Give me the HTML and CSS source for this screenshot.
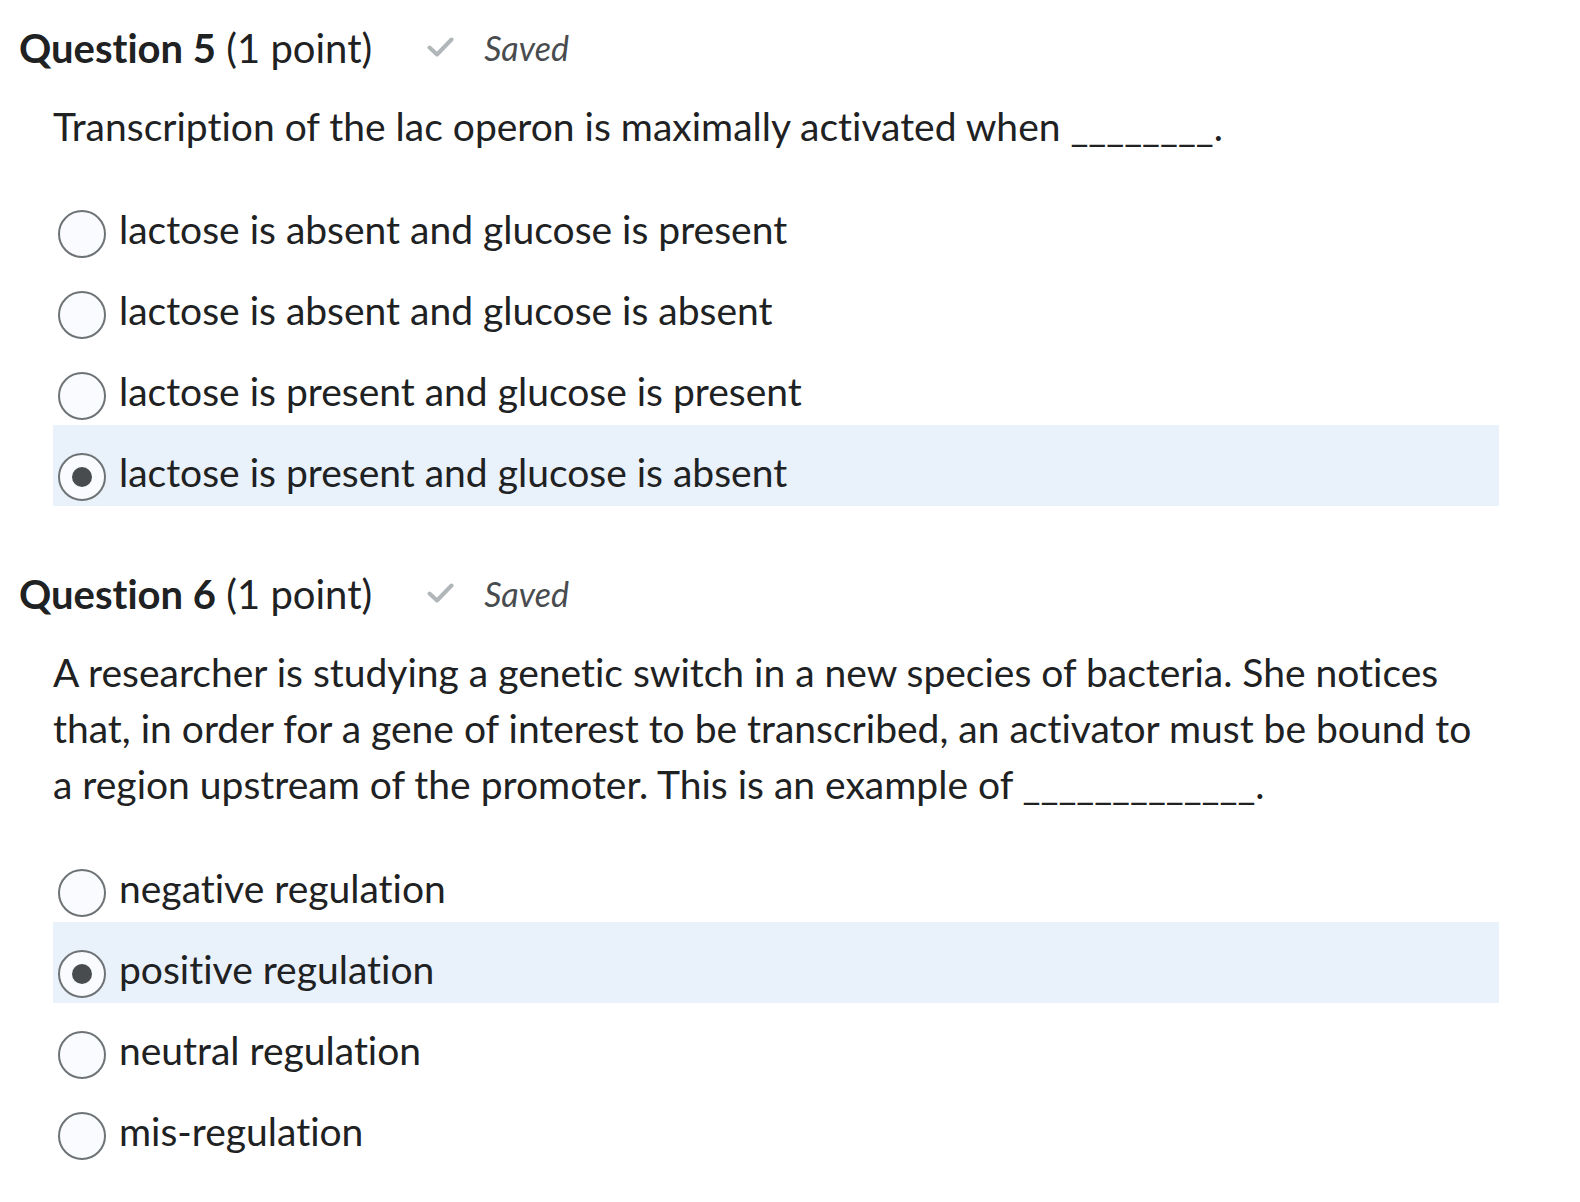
FILE: index.html
```html
<!DOCTYPE html>
<html lang="en">
<head>
<meta charset="utf-8">
<title>Quiz</title>
<link rel="stylesheet" href="styles.css">
</head>
<body>
<div class="page">
  <section class="question q5">
    <div class="q-head">
      <h2 class="q-title"><strong>Question 5</strong> (1 point)</h2>
      <span class="saved">
        <svg class="check" viewBox="0 0 27 20" width="27" height="20" aria-hidden="true"><polyline points="2.5,10.5 10,17.5 24.5,2.5" fill="none" stroke="#b1b6b9" stroke-width="4" stroke-linecap="round" stroke-linejoin="round"/></svg>
        <em>Saved</em>
      </span>
    </div>
    <p class="q-text">Transcription of the lac operon is maximally activated when ________.</p>
    <ul class="options">
      <li class="opt"><span class="radio"></span><span class="opt-label">lactose is absent and glucose is present</span></li>
      <li class="opt"><span class="radio"></span><span class="opt-label">lactose is absent and glucose is absent</span></li>
      <li class="opt"><span class="radio"></span><span class="opt-label">lactose is present and glucose is present</span></li>
      <li class="opt selected"><span class="radio checked"></span><span class="opt-label">lactose is present and glucose is absent</span></li>
    </ul>
  </section>
  <section class="question q6">
    <div class="q-head">
      <h2 class="q-title"><strong>Question 6</strong> (1 point)</h2>
      <span class="saved">
        <svg class="check" viewBox="0 0 27 20" width="27" height="20" aria-hidden="true"><polyline points="2.5,10.5 10,17.5 24.5,2.5" fill="none" stroke="#b1b6b9" stroke-width="4" stroke-linecap="round" stroke-linejoin="round"/></svg>
        <em>Saved</em>
      </span>
    </div>
    <p class="q-text">A researcher is studying a genetic switch in a new species of bacteria. She notices that, in order for a gene of interest to be transcribed, an activator must be bound to a region upstream of the promoter. This is an example of _____________.</p>
    <ul class="options">
      <li class="opt"><span class="radio"></span><span class="opt-label">negative regulation</span></li>
      <li class="opt selected"><span class="radio checked"></span><span class="opt-label">positive regulation</span></li>
      <li class="opt"><span class="radio"></span><span class="opt-label">neutral regulation</span></li>
      <li class="opt"><span class="radio"></span><span class="opt-label">mis-regulation</span></li>
    </ul>
  </section>
</div>
</body>
</html>
```
FILE: styles.css
```css
html, body {
  margin: 0;
  padding: 0;
  background: #ffffff;
}

body {
  font-family: Lato, "Noto Sans", sans-serif;
  color: #202122;
  font-variant-ligatures: none;
  font-feature-settings: "liga" 0, "clig" 0;
}

.page {
  width: 1580px;
  padding-top: 20px;
}

.question {
  display: flex;
  flex-direction: column;
}

.q6 {
  margin-top: 60px;
}

.q-head {
  display: flex;
  align-items: center;
  height: 56px;
  padding-left: 19px;
}

.q-title {
  margin: 0;
  font-size: 40px;
  font-weight: 400;
  line-height: 56px;
  color: #202122;
}

.q-title strong {
  font-weight: 700;
}

.saved {
  display: flex;
  align-items: center;
  margin-left: 55px;
  color: #494c4e;
}

.check {
  display: block;
  width: 27px;
  height: 20px;
  margin-top: -3px;
}

.saved em {
  font-size: 34px;
  font-style: italic;
  margin-left: 30px;
  line-height: 56px;
}

.q-text {
  margin: 22px 0 0 53px;
  width: 1446px;
  font-size: 39px;
  line-height: 56px;
}

.q6 .q-text {
  margin-top: 22px;
}

.options {
  list-style: none;
  margin: 28px 0 0 53px;
  padding: 0;
  width: 1446px;
}

.q6 .options {
  margin-top: 29px;
}

.opt {
  display: flex;
  align-items: flex-start;
  box-sizing: border-box;
  height: 81px;
  padding: 23px 0 0 5px;
}

.opt.selected {
  background: #e9f1fb;
}

.radio {
  flex: none;
  box-sizing: border-box;
  width: 48px;
  height: 48px;
  margin-top: 5px;
  border: 2.5px solid #6e7376;
  border-radius: 50%;
  background: #f9fbff;
  display: flex;
  align-items: center;
  justify-content: center;
}

.radio.checked::after {
  content: "";
  width: 20px;
  height: 20px;
  border-radius: 50%;
  background: #494c4e;
}

.opt-label {
  margin-left: 13px;
  margin-top: 2px;
  font-size: 39px;
  line-height: 44px;
}
```
